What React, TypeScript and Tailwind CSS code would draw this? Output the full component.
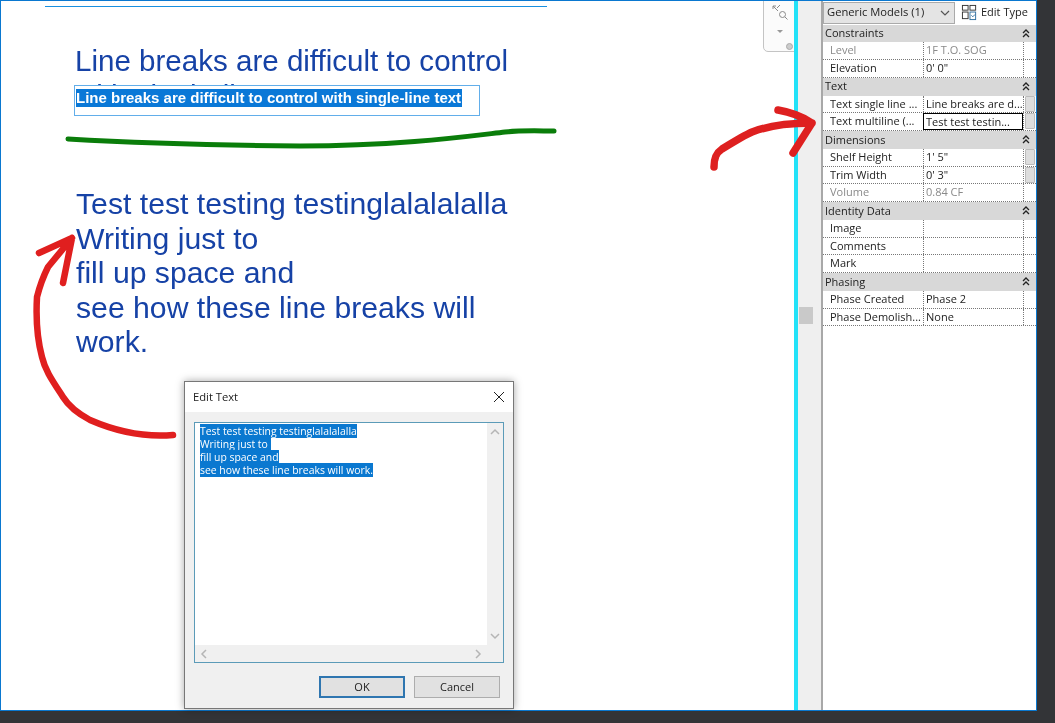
import React from "react";

type Row =
  | { kind: "head"; label: string }
  | { kind: "row"; label: string; value?: string; muted?: boolean; thumb?: boolean; active?: boolean };

const rows: Row[] = [
  { kind: "head", label: "Constraints" },
  { kind: "row", label: "Level", value: "1F T.O. SOG", muted: true },
  { kind: "row", label: "Elevation", value: "0'  0\"" },
  { kind: "head", label: "Text" },
  { kind: "row", label: "Text single line ...", value: "Line breaks are d...", thumb: true },
  { kind: "row", label: "Text multiline (...", value: "Test test testin...", thumb: true, active: true },
  { kind: "head", label: "Dimensions" },
  { kind: "row", label: "Shelf Height", value: "1'  5\"", thumb: true },
  { kind: "row", label: "Trim Width", value: "0'  3\"", thumb: true },
  { kind: "row", label: "Volume", value: "0.84 CF", muted: true },
  { kind: "head", label: "Identity Data" },
  { kind: "row", label: "Image" },
  { kind: "row", label: "Comments" },
  { kind: "row", label: "Mark" },
  { kind: "head", label: "Phasing" },
  { kind: "row", label: "Phase Created", value: "Phase 2" },
  { kind: "row", label: "Phase Demolish...", value: "None" },
];

function Collapse() {
  return (
    <svg width="8" height="9" viewBox="0 0 8 9" fill="none" stroke="#222" strokeWidth="1.3">
      <path d="M1 4 L4 1 L7 4 M1 8 L4 5 L7 8" />
    </svg>
  );
}

function PropertyRow({ row }: { row: Row }) {
  if (row.kind === "head") {
    return (
      <div className="flex h-[17.75px] items-center justify-between bg-[#d8d8d8] pl-[2px] pr-[6px] text-[#222]">
        <span>{row.label}</span>
        <Collapse />
      </div>
    );
  }
  return (
    <div className={`grid h-[17.75px] grid-cols-[100px_100px_1fr] border-b border-dotted border-[#777] ${row.muted ? "text-[#8a8a8a]" : "text-[#222]"}`}>
      <span className="truncate pl-[7px] leading-[16px]">{row.label}</span>
      <span
        className={`border-l border-dotted border-[#777] pl-[2px] leading-[15px] ${
          row.active ? "border border-solid border-black" : ""
        }`}
      >
        {row.value}
      </span>
      <span className="border-l border-dotted border-[#777]">
        {row.thumb && <span className="ml-[1px] block h-[16px] w-[10px] rounded-[1px] border border-[#bbb] bg-[#ddd]" />}
      </span>
    </div>
  );
}

function Strokes() {
  return (
    <svg className="pointer-events-none absolute inset-0 z-20" width="1055" height="723" viewBox="0 0 1055 723" fill="none" strokeLinecap="round" strokeLinejoin="round">
      <path d="M68 139 C120 142 190 145 300 146 C400 146 470 136 505 132 C525 130 540 131 554 131" stroke="#0a7d0a" strokeWidth="5" />
      <path d="M173 435 C150 437 120 433 90 420 C75 412 68 405 63 397 C52 380 45 370 42 357 C36 335 36 315 37 297 C40 285 44 275 48 267 L72 238 M39 253 L72 238 L63 283" stroke="#e01f1f" strokeWidth="6.5" />
      <path d="M714 167 C714 158 716 153 722 149 C735 141 745 135 752 132 C765 127 785 123 812 123 M778 110 C790 112 803 117 812 123 L793 153" stroke="#de2020" strokeWidth="7.5" />
    </svg>
  );
}

function EditTypeIcon() {
  return (
    <svg width="17" height="17" viewBox="0 0 18 18" fill="none" stroke="#333" strokeWidth="1">
      <rect x="1.5" y="1.5" width="6" height="5" />
      <rect x="9.5" y="1.5" width="6" height="5" />
      <rect x="1.5" y="8.5" width="6" height="7" />
      <rect x="9.5" y="8.5" width="6" height="8" stroke="#2f6f9f" />
      <path d="M11 12l1.5 1.5L15 11" stroke="#2f6f9f" />
    </svg>
  );
}

function Dialog() {
  return (
    <div className="absolute left-[184px] top-[381px] z-10 flex h-[328px] w-[330px] flex-col border border-[#777] bg-[#f0f0f0] shadow-[0_0_8px_rgba(0,0,0,0.35)] font-['Open_Sans','Noto_Sans',sans-serif] text-[11px] text-[#222]">
      <div className="flex h-[30px] items-center justify-between bg-white pl-[8px] pr-[8px]">
        <span className="text-[11.2px]">Edit Text</span>
        <svg width="12" height="12" viewBox="0 0 12 12" stroke="#222" strokeWidth="1">
          <path d="M1 1l10 10M11 1L1 11" />
        </svg>
      </div>
      <div className="ml-[9px] mr-[9px] mt-[10px] grid h-[241px] grid-cols-[1fr_16px] grid-rows-[1fr_17px] border border-[#5b9bb8] bg-[#f0f0f0]">
        <div className="bg-white pl-[5px] pt-[2px] text-[10.4px] leading-[13px] text-white">
          {["Test test testing testinglalalalalla", "Writing just to ", "fill up space and", "see how these line breaks will work."].map((t) => (
            <div key={t}>
              <span className="bg-[#0a78d0] whitespace-pre">{t}</span>
            </div>
          ))}
        </div>
        <div className="flex flex-col items-center justify-between py-[5px] text-[#b5b5b5]">
          <svg width="10" height="7" viewBox="0 0 10 7" fill="none" stroke="currentColor" strokeWidth="1.5"><path d="M1 6l4-4 4 4" /></svg>
          <svg width="10" height="7" viewBox="0 0 10 7" fill="none" stroke="currentColor" strokeWidth="1.5"><path d="M1 1l4 4 4-4" /></svg>
        </div>
        <div className="flex items-center justify-between px-[5px] text-[#b5b5b5]">
          <svg width="7" height="10" viewBox="0 0 7 10" fill="none" stroke="currentColor" strokeWidth="1.5"><path d="M6 1L2 5l4 4" /></svg>
          <svg width="7" height="10" viewBox="0 0 7 10" fill="none" stroke="currentColor" strokeWidth="1.5"><path d="M1 1l4 4-4 4" /></svg>
        </div>
        <div />
      </div>
      <div className="mr-[13px] mt-[13px] flex justify-end gap-[9px]">
        <div className="flex h-[22px] w-[86px] items-center justify-center border-2 border-[#2f76b0] bg-[#e1e1e1]">OK</div>
        <div className="flex h-[22px] w-[86px] items-center justify-center border border-[#adadad] bg-[#e1e1e1]">Cancel</div>
      </div>
    </div>
  );
}

function Canvas() {
  return (
    <div className="relative flex-1 overflow-hidden bg-white font-['Liberation_Sans',Arial,sans-serif] text-[#1642a6]">
      <div className="absolute left-[44px] top-[5px] h-[1px] w-[502px] bg-[#1890e0]" />
      <div className="absolute left-[74px] top-[42px] h-[42px] overflow-hidden whitespace-nowrap text-[29.55px] leading-[35px]">
        Line breaks are difficult to control
        <br />
        with single-line text
      </div>
      <div className="absolute left-[73px] top-[84px] h-[31px] w-[406px] border border-[#62aeea] bg-white pl-[1px] pt-[3px]">
        <span className="block w-[386px] whitespace-nowrap bg-[#0a78d7] text-[15px] font-bold leading-[18px] text-white">
          Line breaks are difficult to control with single-line text
        </span>
      </div>
      <div className="absolute left-[75px] top-[186px] whitespace-nowrap text-[30.2px] leading-[34.5px]">
        Test test testing testinglalalalalla
        <br />
        Writing just to
        <br />
        fill up space and
        <br />
        see how these line breaks will
        <br />
        work.
      </div>
      <div className="absolute right-[-3px] top-[-1px] flex h-[52px] w-[34px] flex-col items-center rounded-bl-[5px] border border-[#c4c4c4] bg-[#fbfbfb]">
        <svg className="mt-[2px]" width="18" height="18" viewBox="0 0 18 18" fill="none" stroke="#8a8a8a" strokeWidth="1">
          <path d="M2 3l5 5M2 3h3M2 3v3M9 2L6 5" />
          <circle cx="11.5" cy="11.5" r="3" />
          <path d="M14 14l2.5 2.5" />
        </svg>
        <div className="mt-[9px] h-0 w-0 border-x-[3px] border-t-[3px] border-x-transparent border-t-[#999]" />
        <div className="ml-auto mr-[3px] mt-[10px] h-[7px] w-[7px] rounded-full border border-[#aaa] bg-[#ccc]" />
      </div>
    </div>
  );
}

export default function App() {
  return (
    <div className="relative h-[723px] w-[1055px] overflow-hidden bg-[#333437] blur-[0.35px]">
      <div className="flex h-[711px] w-[1037px] border border-[#0a78d0] bg-white">
        <Canvas />
        <div className="w-[4px] shrink-0 bg-[#22e2f8]" />
        <div className="flex w-[23px] shrink-0 flex-col bg-[#efefef] pl-[1px] pt-[306px]">
          <div className="h-[17px] w-[14px] bg-[#c9c9c9]" />
        </div>
        <div className="w-[2px] shrink-0 bg-[#a8a8a8]" />
        <div className="flex w-[213px] shrink-0 flex-col bg-white font-['Open_Sans','Noto_Sans',sans-serif] text-[11px]">
          <div className="flex h-[23.6px] shrink-0 items-center gap-[6px]">
            <div className="flex h-[22px] w-[132px] items-center justify-between border border-[#aaa] bg-[#e4e4e4] pl-[3px] pr-[4px] text-[11.2px] text-[#222]">
              <span>Generic Models (1)</span>
              <svg width="10" height="6" viewBox="0 0 10 6" fill="none" stroke="#555" strokeWidth="1.2"><path d="M1 1l4 4 4-4" /></svg>
            </div>
            <EditTypeIcon />
            <span className="-ml-[3px] -mt-[2px] text-[#222]">Edit Type</span>
          </div>
          {rows.map((r) => (
            <PropertyRow key={r.label} row={r} />
          ))}
        </div>
      </div>
      <Dialog />
      <Strokes />
    </div>
  );
}
